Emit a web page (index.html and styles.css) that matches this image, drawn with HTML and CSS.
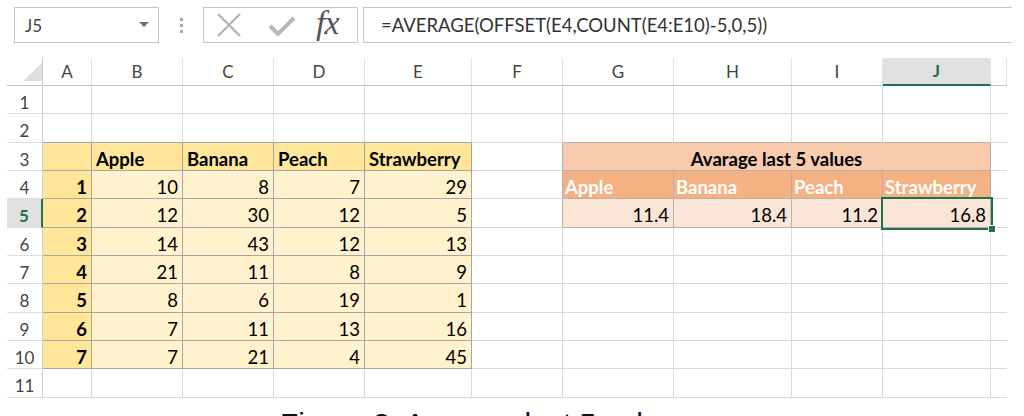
FILE: index.html
```html
<!DOCTYPE html>
<html>
<head>
<meta charset="utf-8">
<link rel="stylesheet" href="styles.css">
</head>
<body>
<div class="bar">
  <div class="namebox"><span>J5</span><span class="tri"></span></div>
  <div class="dots"><i></i><i></i><i></i></div>
  <div class="fbtns">
    <svg class="ico-x" width="26" height="24" viewBox="0 0 26 24"><path d="M2 1 L24 23 M24 1 L2 23" stroke="#b3b3b3" stroke-width="2.2" fill="none"/></svg>
    <svg class="ico-ok" width="28" height="22" viewBox="0 0 28 22"><path d="M2 11 L10 19 L26 3" stroke="#b8b8b8" stroke-width="4" fill="none"/></svg>
    <span class="fx">fx</span>
  </div>
  <div class="formula">=AVERAGE(OFFSET(E4,COUNT(E4:E10)-5,0,5))</div>
</div>

<div class="sheet">
  <!-- header -->
  <div class="c corner"><svg width="19" height="18" viewBox="0 0 19 18"><path d="M19 0 L19 18 L0 18 Z" fill="#dedede"/></svg></div>
  <div class="c hd">A</div><div class="c hd">B</div><div class="c hd">C</div><div class="c hd">D</div><div class="c hd">E</div>
  <div class="c hd">F</div><div class="c hd">G</div><div class="c hd">H</div><div class="c hd">I</div><div class="c hd hsel">J</div><div class="c hd last"></div>

  <!-- row 1 -->
  <div class="c rh">1</div>
  <div class="c"></div><div class="c"></div><div class="c"></div><div class="c"></div><div class="c"></div>
  <div class="c"></div><div class="c"></div><div class="c"></div><div class="c"></div><div class="c"></div><div class="c last"></div>

  <!-- row 2 -->
  <div class="c rh">2</div>
  <div class="c tby"></div><div class="c tby"></div><div class="c tby"></div><div class="c tby"></div><div class="c tby"></div>
  <div class="c"></div><div class="c tbo"></div><div class="c tbo"></div><div class="c tbo"></div><div class="c tbo"></div><div class="c last"></div>

  <!-- row 3 -->
  <div class="c rh">3</div>
  <div class="c y yh"></div><div class="c y yh">Apple</div><div class="c y yh">Banana</div><div class="c y yh">Peach</div><div class="c y yh">Strawberry</div>
  <div class="c lbo"></div><div class="c o ot">Avarage last 5 values</div><div class="c last"></div>

  <!-- row 4 -->
  <div class="c rh">4</div>
  <div class="c y yk">1</div><div class="c y yd">10</div><div class="c y yd">8</div><div class="c y yd">7</div><div class="c y yd">29</div>
  <div class="c lbo"></div><div class="c o oh">Apple</div><div class="c o oh">Banana</div><div class="c o oh">Peach</div><div class="c o oh">Strawberry</div><div class="c last"></div>

  <!-- row 5 -->
  <div class="c rh rsel">5</div>
  <div class="c y yk">2</div><div class="c y yd">12</div><div class="c y yd">30</div><div class="c y yd">12</div><div class="c y yd">5</div>
  <div class="c lbo"></div><div class="c o od">11.4</div><div class="c o od">18.4</div><div class="c o od">11.2</div><div class="c o od sel">16.8</div><div class="c last"></div>

  <!-- row 6 -->
  <div class="c rh">6</div>
  <div class="c y yk">3</div><div class="c y yd">14</div><div class="c y yd">43</div><div class="c y yd">12</div><div class="c y yd">13</div>
  <div class="c"></div><div class="c"></div><div class="c"></div><div class="c"></div><div class="c"></div><div class="c last"></div>

  <!-- row 7 -->
  <div class="c rh">7</div>
  <div class="c y yk">4</div><div class="c y yd">21</div><div class="c y yd">11</div><div class="c y yd">8</div><div class="c y yd">9</div>
  <div class="c"></div><div class="c"></div><div class="c"></div><div class="c"></div><div class="c"></div><div class="c last"></div>

  <!-- row 8 -->
  <div class="c rh">8</div>
  <div class="c y yk">5</div><div class="c y yd">8</div><div class="c y yd">6</div><div class="c y yd">19</div><div class="c y yd">1</div>
  <div class="c"></div><div class="c"></div><div class="c"></div><div class="c"></div><div class="c"></div><div class="c last"></div>

  <!-- row 9 -->
  <div class="c rh">9</div>
  <div class="c y yk">6</div><div class="c y yd">7</div><div class="c y yd">11</div><div class="c y yd">13</div><div class="c y yd">16</div>
  <div class="c"></div><div class="c"></div><div class="c"></div><div class="c"></div><div class="c"></div><div class="c last"></div>

  <!-- row 10 -->
  <div class="c rh">10</div>
  <div class="c y yk">7</div><div class="c y yd">7</div><div class="c y yd">21</div><div class="c y yd">4</div><div class="c y yd">45</div>
  <div class="c"></div><div class="c"></div><div class="c"></div><div class="c"></div><div class="c"></div><div class="c last"></div>

  <!-- row 11 -->
  <div class="c rh">11</div>
  <div class="c"></div><div class="c"></div><div class="c"></div><div class="c"></div><div class="c"></div>
  <div class="c"></div><div class="c"></div><div class="c"></div><div class="c"></div><div class="c"></div><div class="c last"></div>
</div>

<div class="caption">Figure 3. Average last 5 values</div>
</body>
</html>
```

FILE: styles.css
```css
html, body {
  margin: 0;
  padding: 0;
  background: #ffffff;
  overflow: hidden;
  height: 416px;
}

body {
  font-family: Lato, "Open Sans", sans-serif;
  color: #000;
}

/* ---------- formula bar ---------- */
.bar {
  display: flex;
  align-items: stretch;
  height: 36px;
  padding: 7px 12px 0 14px;
}

.namebox {
  box-sizing: border-box;
  width: 145px;
  border: 1px solid #c6c6c6;
  display: flex;
  align-items: center;
  justify-content: space-between;
  padding: 0 9px 0 10px;
  font-size: 17px;
  color: #444;
}

.tri {
  width: 0;
  height: 0;
  border-left: 5px solid transparent;
  border-right: 5px solid transparent;
  border-top: 5px solid #707070;
  margin-top: -2px;
}

.dots {
  display: flex;
  flex-direction: column;
  justify-content: center;
  gap: 3px;
  width: 3px;
  margin-left: 21px;
}

.dots i {
  display: block;
  width: 3px;
  height: 3px;
  background: #a8a8a8;
}

.fbtns {
  box-sizing: border-box;
  width: 155px;
  margin-left: 20px;
  border: 1px solid #c6c6c6;
  display: flex;
  align-items: center;
  padding-left: 12px;
}

.ico-ok {
  margin-left: 26px;
  margin-top: 2px;
}

.fx {
  font-family: "Liberation Serif", "DejaVu Serif", serif;
  font-style: italic;
  font-size: 34px;
  line-height: 1;
  color: #555;
  margin-left: 20px;
  margin-top: -4px;
  letter-spacing: -1px;
}

.formula {
  flex: 1;
  margin-left: 5px;
  box-sizing: border-box;
  border-top: 1px solid #c6c6c6;
  border-bottom: 1px solid #c6c6c6;
  border-left: 1px solid #c6c6c6;
  display: flex;
  align-items: center;
  padding-left: 17px;
  font-size: 18.5px;
  color: #333;
}

/* ---------- sheet ---------- */
.sheet {
  display: grid;
  grid-template-columns: 36px 49px 91px 91px 91px 107px 91px 111px 118px 91px 108px 16px;
  grid-template-rows: 28px repeat(11, 28.33px);
  margin: 15px 0 0 7px;
  width: 1000px;
}

.c {
  box-sizing: border-box;
  border-right: 1px solid #dadada;
  border-bottom: 1px solid #dadada;
  display: flex;
  align-items: flex-end;
  padding: 0 4px;
  font-size: 18.5px;
  line-height: 1.2;
  white-space: nowrap;
  overflow: visible;
}

.last {
  border-right: none;
}

.corner {
  justify-content: flex-end;
  align-items: flex-end;
  padding: 0 0 4px 0;
  border-right: 1px solid #cfcfcf;
  border-bottom: 1px solid #c4c4c4;
}

.hd {
  justify-content: center;
  align-items: center;
  color: #444;
  font-size: 17px;
  border-right: 1px solid #e3e3e3;
  border-bottom: 1px solid #c4c4c4;
  padding-top: 1px;
}

.hsel {
  background: #e1e1e1;
  color: #217346;
  font-weight: 700;
  border-bottom: 2px solid #217346;
}

.rh {
  justify-content: center;
  color: #444;
  font-size: 17px;
  border-right: 1px solid #cfcfcf;
  border-bottom: 1px solid #e0e0e0;
}

.rsel {
  background: #e1e1e1;
  color: #217346;
  font-weight: 700;
  border-right: 2px solid #217346;
}

/* yellow table */
.y {
  border-right-color: #a6a6a6;
  border-bottom-color: #a6a6a6;
}

.yh {
  background: #ffe699;
  font-weight: 700;
}

.yk {
  background: #ffe699;
  font-weight: 700;
  justify-content: flex-end;
}

.yd {
  background: #fff2cc;
  justify-content: flex-end;
}

.tby {
  border-bottom-color: #a6a6a6;
}

/* orange table */
.o {
  border-right-color: #b2b2b2;
  border-bottom-color: #b2b2b2;
}

.tbo {
  border-bottom-color: #b2b2b2;
}

.lbo {
  border-right-color: #b2b2b2;
}

.ot {
  grid-column: span 4;
  background: #f8cbad;
  font-weight: 700;
  justify-content: center;
}

.oh {
  background: #f4b183;
  color: #ffffff;
  font-weight: 700;
  padding-left: 2px;
}

.od {
  background: #fbe5d6;
  justify-content: flex-end;
}

.sel {
  position: relative;
  z-index: 2;
}

.sel::after {
  content: "";
  position: absolute;
  top: -2px;
  left: -2px;
  right: -3px;
  bottom: -3px;
  border: 2px solid #217346;
}

.sel::before {
  content: "";
  position: absolute;
  right: -6px;
  bottom: -6px;
  width: 6px;
  height: 6px;
  background: #217346;
  border: 1px solid #ffffff;
  z-index: 3;
}

/* ---------- caption ---------- */
.caption {
  font-family: "Liberation Sans", Arial, sans-serif;
  font-size: 30px;
  line-height: 1;
  color: #111;
  padding-left: 280px;
  margin-top: 11px;
  white-space: nowrap;
}
```
